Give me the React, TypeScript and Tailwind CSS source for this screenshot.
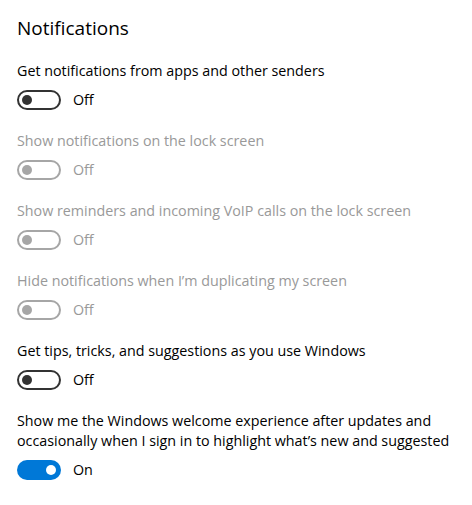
import React from "react";

type Row = { label: string[]; on: boolean; disabled: boolean };

const rows: Row[] = [
  { label: ["Get notifications from apps and other senders"], on: false, disabled: false },
  { label: ["Show notifications on the lock screen"], on: false, disabled: true },
  { label: ["Show reminders and incoming VoIP calls on the lock screen"], on: false, disabled: true },
  { label: ["Hide notifications when I\u2019m duplicating my screen"], on: false, disabled: true },
  { label: ["Get tips, tricks, and suggestions as you use Windows"], on: false, disabled: false },
  {
    label: [
      "Show me the Windows welcome experience after updates and",
      "occasionally when I sign in to highlight what\u2019s new and suggested",
    ],
    on: true,
    disabled: false,
  },
];

function Toggle({ on, disabled }: { on: boolean; disabled: boolean }) {
  if (on) {
    return (
      <div className="w-[44px] h-[20px] rounded-full bg-[#0078d7] flex items-center justify-end pr-[5px]">
        <div className="w-[10px] h-[10px] rounded-full bg-white" />
      </div>
    );
  }
  return (
    <div
      className={
        "w-[44px] h-[20px] rounded-full border-2 flex items-center pl-[3px] " +
        (disabled ? "border-[#a6a6a6]" : "border-[#333333]")
      }
    >
      <div
        className={
          "w-[10px] h-[10px] rounded-full " + (disabled ? "bg-[#a6a6a6]" : "bg-[#333333]")
        }
      />
    </div>
  );
}

export default function App() {
  return (
    <div
      className="w-[472px] h-[505px] bg-white pl-[17px] pt-[14px]"
      style={{ fontFamily: '"Open Sans", "Noto Sans", sans-serif' }}
    >
      <h1 className="text-[19px] leading-[28px] text-black">Notifications</h1>
      <div className="flex flex-col mt-[19px] gap-[21px]">
        {rows.map((r, i) => (
          <div key={i} className="flex flex-col">
            <div
              className={
                "text-[14.3px] leading-[20px] " + (r.disabled ? "text-[#999999]" : "text-black")
              }
            >
              {r.label.map((l, j) => (
                <div key={j} className="whitespace-nowrap">{l}</div>
              ))}
            </div>
            <div className="flex items-center mt-[9px] h-[20px]">
              <Toggle on={r.on} disabled={r.disabled} />
              <span
                className={
                  "ml-[12px] text-[14.3px] leading-[20px] " +
                  (r.disabled ? "text-[#999999]" : "text-black")
                }
              >
                {r.on ? "On" : "Off"}
              </span>
            </div>
          </div>
        ))}
      </div>
    </div>
  );
}
